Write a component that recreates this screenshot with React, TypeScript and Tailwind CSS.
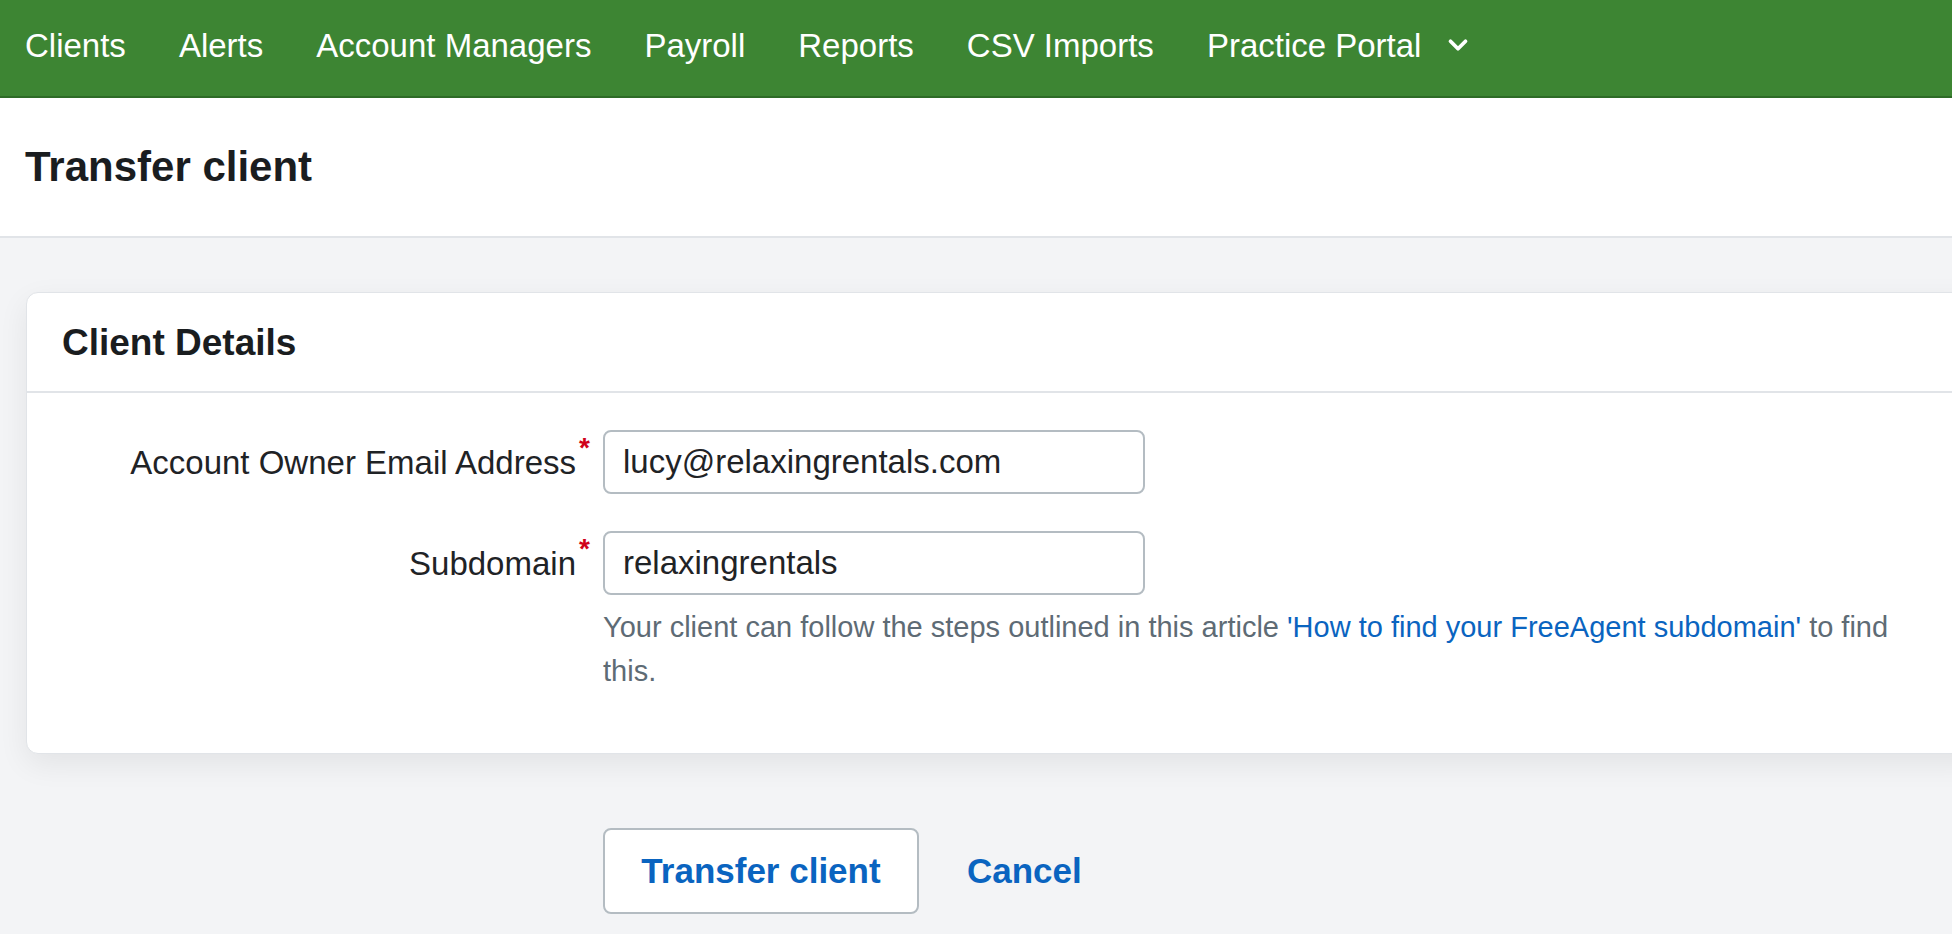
import { ChevronDown } from "lucide-react";

const navItems = [
  "Clients",
  "Alerts",
  "Account Managers",
  "Payroll",
  "Reports",
  "CSV Imports",
];

function NavBar() {
  return (
    <nav className="flex h-[98px] items-center gap-[53px] border-b-2 border-[#2e6b27] bg-[#3d8533] pb-[6px] pl-[25px] text-[33px] leading-none text-white">
      {navItems.map((item) => (
        <a key={item} href="#" className="whitespace-nowrap">
          {item}
        </a>
      ))}
      <a href="#" className="flex items-center gap-[22px] whitespace-nowrap">
        Practice Portal
        <ChevronDown className="h-[30px] w-[30px]" strokeWidth={3} />
      </a>
    </nav>
  );
}

function Field({
  label,
  value,
  children,
}: {
  label: string;
  value: string;
  children?: React.ReactNode;
}) {
  return (
    <div className="flex items-start">
      <div className="flex h-[64px] w-[576px] shrink-0 items-center justify-end pr-[13px]">
        <span className="relative pr-[14px] text-[33px] leading-none text-[#1f2326]">
          {label}
          <span className="absolute -top-[12px] right-0 text-[28px] font-bold text-[#d0021b]">
            *
          </span>
        </span>
      </div>
      <div>
        <input
          readOnly
          value={value}
          className="h-[64px] w-[542px] rounded-[8px] border-2 border-[#b4bcc2] bg-white px-[18px] text-[33px] text-[#1f2326] outline-none"
        />
        {children}
      </div>
    </div>
  );
}

export default function App() {
  return (
    <div
      className="min-h-screen overflow-hidden bg-[#f3f4f6]"
      style={{ fontFamily: '"Liberation Sans", Arial, sans-serif' }}
    >
      <NavBar />

      <header className="flex h-[140px] items-center border-b-2 border-[#e1e4e8] bg-white pl-[25px]">
        <h1 className="text-[42px] font-bold leading-none text-[#1a1d1f]">
          Transfer client
        </h1>
      </header>

      <main className="pt-[54px]">
        <section className="ml-[26px] w-[1960px] rounded-[12px] border border-[#e1e4e8] bg-white shadow-[0_10px_30px_rgba(0,0,0,0.07)]">
          <div className="flex h-[100px] items-center border-b-2 border-[#e1e4e8] pl-[35px]">
            <h2 className="text-[37px] font-bold leading-none text-[#1a1d1f]">
              Client Details
            </h2>
          </div>
          <div className="flex flex-col gap-[37px] pb-[60px] pt-[37px]">
            <Field
              label="Account Owner Email Address"
              value="lucy@relaxingrentals.com"
            />
            <Field label="Subdomain" value="relaxingrentals">
              <p className="mt-[10px] w-[1300px] text-[29px] leading-[44px] text-[#5e6b75]">
                Your client can follow the steps outlined in this article{" "}
                <a href="#" className="text-[#0a64c0]">
                  'How to find your FreeAgent subdomain'
                </a>{" "}
                to find this.
              </p>
            </Field>
          </div>
        </section>

        <div className="mt-[74px] flex items-center gap-[48px] pl-[603px]">
          <button className="h-[86px] w-[316px] rounded-[8px] border-2 border-[#b4bcc2] bg-white text-[35px] font-bold text-[#0a64c0]">
            Transfer client
          </button>
          <a href="#" className="text-[35px] font-bold text-[#0a64c0]">
            Cancel
          </a>
        </div>
      </main>
    </div>
  );
}
